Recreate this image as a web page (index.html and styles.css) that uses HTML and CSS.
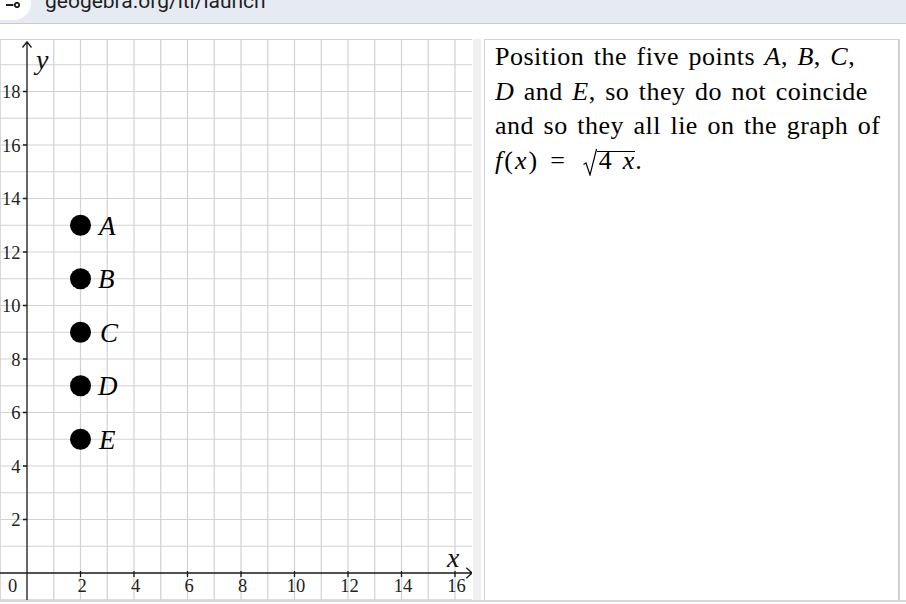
FILE: index.html
```html
<!DOCTYPE html>
<html lang="en">
<head>
<meta charset="utf-8">
<title>GeoGebra task</title>
<link rel="stylesheet" href="styles.css">
</head>
<body>
<div class="topbar">
  <div class="chip">
    <svg class="tune" width="16" height="6" viewBox="0 0 16 6"><path d="M0 3H7.5" stroke="#1f1f1f" stroke-width="2" fill="none"/><circle cx="11" cy="3" r="2.2" stroke="#1f1f1f" stroke-width="1.8" fill="none"/></svg>
  </div>
  <div class="url">geogebra.org/lti/launch</div>
</div>
<div class="gap"></div>
<div class="main">
  <div class="graph">
    <svg width="472" height="561" viewBox="0 39 472 561">
      <path class="grid" d="M0.25 39V600M53.75 39V600M80.5 39V600M107.25 39V600M134 39V600M160.75 39V600M187.5 39V600M214.25 39V600M241 39V600M267.75 39V600M294.5 39V600M321.25 39V600M348 39V600M374.75 39V600M401.5 39V600M428.25 39V600M455 39V600M0 599.75H472M0 546.25H472M0 519.5H472M0 492.75H472M0 466H472M0 439.25H472M0 412.5H472M0 385.75H472M0 359H472M0 332.25H472M0 305.5H472M0 278.75H472M0 252H472M0 225.25H472M0 198.5H472M0 171.75H472M0 145H472M0 118.25H472M0 91.5H472M0 64.75H472M0 39.5H472"/>
      <path class="axis" d="M27 600V41.8M22.5 47.5L27 41.8L31.5 47.5M0 573H472M466.3 567.8L472 573L466.3 578.2"/>
      <path class="axis" d="M80.5 571V577M134 571V577M187.5 571V577M241 571V577M294.5 571V577M348 571V577M401.5 571V577M455 571V577M23 519.5H27M23 466H27M23 412.5H27M23 359H27M23 305.5H27M23 252H27M23 198.5H27M23 145H27M23 91.5H27"/>
      <g class="ticklabel xl">
        <text x="82" y="592">2</text>
        <text x="135.5" y="592">4</text>
        <text x="189" y="592">6</text>
        <text x="242.5" y="592">8</text>
        <text x="296" y="592">10</text>
        <text x="349.5" y="592">12</text>
        <text x="403" y="592">14</text>
        <text x="456.5" y="592">16</text>
        <text x="12.5" y="592">0</text>
      </g>
      <g class="ticklabel yl">
        <text x="20.5" y="526">2</text>
        <text x="20.5" y="472.5">4</text>
        <text x="20.5" y="419">6</text>
        <text x="20.5" y="365.5">8</text>
        <text x="20.5" y="312">10</text>
        <text x="20.5" y="258.5">12</text>
        <text x="20.5" y="205">14</text>
        <text x="20.5" y="151.5">16</text>
        <text x="20.5" y="98">18</text>
      </g>
      <text class="axislabel" x="36" y="69">y</text>
      <text class="axislabel" x="447" y="566.5">x</text>
      <g class="points">
        <circle cx="80.5" cy="225.25" r="10.5"/>
        <circle cx="80.5" cy="278.75" r="10.5"/>
        <circle cx="80.5" cy="332.25" r="10.5"/>
        <circle cx="80.5" cy="385.75" r="10.5"/>
        <circle cx="80.5" cy="439.25" r="10.5"/>
      </g>
      <g class="ptlabel">
        <text x="99" y="234.5">A</text>
        <text x="98" y="288">B</text>
        <text x="100" y="341.5">C</text>
        <text x="98" y="395">D</text>
        <text x="99" y="448.5">E</text>
      </g>
    </svg>
  </div>
  <div class="splitter"></div>
  <div class="text-panel">
    <p class="prompt">Position the five points <i>A</i>, <i>B</i>, <i>C</i>,<br><i>D</i> and <i>E</i>, so they do not coincide<br>and so they all lie on the graph of<br><span class="math"><i>f</i>(<i>x</i>)<span class="eq">=</span><span class="sqrt"><svg class="radical" width="14" height="27" viewBox="0 0 14 27"><path d="M0.5 15.5L3 14L7 26L13.4 0.6H14" fill="none" stroke="#000" stroke-width="1.2"/></svg><span class="radicand">4&nbsp;<i>x</i></span></span>.</span></p>
  </div>
</div>
<div class="bottom-line"></div>
</body>
</html>
```

FILE: styles.css
```css
html, body {
  margin: 0;
  padding: 0;
  background: #ffffff;
}
body {
  width: 906px;
  height: 604px;
  overflow: hidden;
}
.topbar {
  height: 23px;
  background: #e6ebf3;
  border-bottom: 1px solid #c5cad2;
  display: flex;
  align-items: flex-start;
  overflow: hidden;
}
.chip {
  width: 31px;
  height: 34px;
  margin-top: -14px;
  background: #ffffff;
  border-radius: 0 17px 17px 0;
  display: flex;
  align-items: flex-end;
  box-sizing: border-box;
  padding: 0 0 12px 6px;
  flex-shrink: 0;
}
.tune {
  display: block;
}
.url {
  margin-left: 14px;
  margin-top: -9.5px;
  font-family: Roboto, "Noto Sans", sans-serif;
  font-size: 21px;
  line-height: 21px;
  color: #1f1f1f;
  white-space: nowrap;
}
.gap {
  height: 15px;
}
.main {
  display: flex;
  height: 561px;
}
.graph {
  width: 472px;
  flex-shrink: 0;
}
.graph svg {
  display: block;
}
.grid {
  fill: none;
  stroke: #d2d2d2;
  stroke-width: 1.2;
}
.axis {
  fill: none;
  stroke: #1a1a1a;
  stroke-width: 1.3;
}
.ticklabel {
  font-family: "Liberation Serif", serif;
  font-size: 18.5px;
  fill: #222;
}
.xl text {
  text-anchor: middle;
}
.yl text {
  text-anchor: end;
}
.axislabel {
  font-family: "Liberation Serif", serif;
  font-style: italic;
  font-size: 28px;
  fill: #111;
}
.points circle {
  fill: #000;
}
.ptlabel {
  font-family: "Liberation Serif", serif;
  font-style: italic;
  font-size: 27px;
  fill: #000;
}
.splitter {
  width: 8px;
  margin-left: 1px;
  background: #f0f0f0;
  flex-shrink: 0;
}
.text-panel {
  margin-left: 3px;
  width: 416px;
  box-sizing: border-box;
  border: 1px solid #d3d3d3;
  border-right: 2px solid #d0d0d0;
  border-bottom: none;
  flex-shrink: 0;
}
.prompt {
  margin: 0;
  padding: 0 0 0 10px;
  font-family: "Liberation Serif", serif;
  font-size: 26px;
  line-height: 34.7px;
  letter-spacing: 0.5px;
  word-spacing: 2.5px;
  color: #000;
  white-space: nowrap;
}
.prompt i {
  font-style: italic;
}
.math {
  letter-spacing: 2px;
}
.eq {
  margin: 0 16px 0 11px;
}
.sqrt {
  display: inline-block;
  white-space: nowrap;
}
.radical {
  vertical-align: -7px;
}
.radicand {
  display: inline-block;
  border-top: 1.2px solid #000;
  padding-top: 1px;
  padding-left: 2px;
  line-height: 16px;
  letter-spacing: 1px;
}
.bottom-line {
  height: 2px;
  background: #d9d9d9;
}
```
